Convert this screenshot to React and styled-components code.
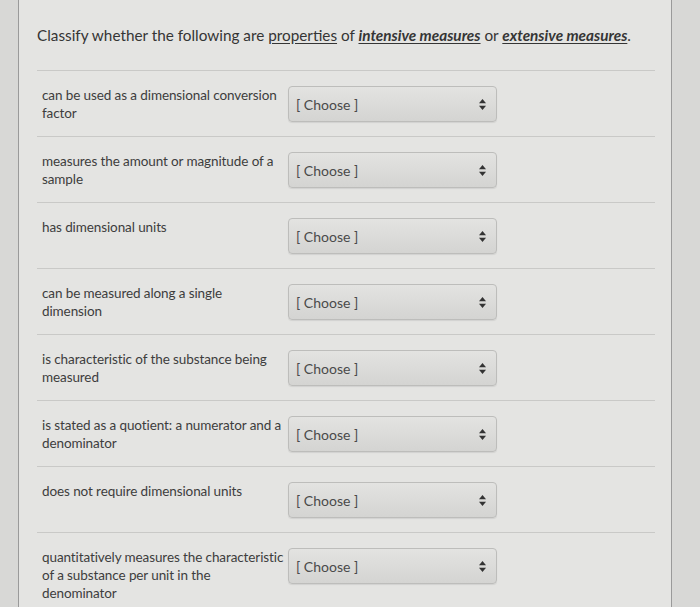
import styled, { createGlobalStyle } from "styled-components";

const Global = createGlobalStyle`
  body {
    margin: 0;
    background: #d8d8d6;
    font-family: Lato, "Open Sans", sans-serif;
    color: #3b3b3b;
  }
`;

const Panel = styled.div`
  margin-left: 18px;
  width: 654px;
  min-height: 607px;
  box-sizing: border-box;
  background: #e4e4e2;
  border-left: 1px solid #9a9a9a;
  border-right: 1px solid #9a9a9a;
  padding: 24px 17px 0 18px;
`;

const Title = styled.p`
  margin: 0 0 24px 0;
  font-size: 15.3px;
  line-height: 22px;
  color: #353535;
`;

const Link = styled.span`
  text-decoration: underline;
  text-underline-offset: 2px;
  font-weight: ${({ strong }) => (strong ? 700 : 400)};
  font-style: ${({ strong }) => (strong ? "italic" : "normal")};
`;

const List = styled.div`
  border-top: 1px solid #c9c9c7;
  width: 618px;
`;

const Row = styled.div`
  display: flex;
  align-items: flex-start;
  gap: 4px;
  padding: 15px 0 14px 5px;
  min-height: 36px;
  border-bottom: 1px solid #c9c9c7;
`;

const Label = styled.div`
  width: 242px;
  font-size: 13.5px;
  line-height: 18px;
  letter-spacing: -0.1px;
  color: #3d3d3d;
`;

const Select = styled.div`
  width: 209px;
  height: 36px;
  box-sizing: border-box;
  display: flex;
  align-items: center;
  justify-content: space-between;
  padding: 0 10px 0 7px;
  border: 1px solid #bdbdbb;
  border-radius: 4px;
  background: linear-gradient(#e3e3e1, #d4d4d2);
  box-shadow: 0 1px 1px rgba(0, 0, 0, 0.08);
  font-size: 14px;
  color: #4a4a4a;
`;

const Arrows = () => (
  <svg width="7" height="11" viewBox="0 0 7 11">
    <path d="M3.5 0 L7 4.2 L0 4.2 Z" fill="#333" />
    <path d="M0 6.8 L7 6.8 L3.5 11 Z" fill="#333" />
  </svg>
);

const items = [
  "can be used as a dimensional conversion factor",
  "measures the amount or magnitude of a sample",
  "has dimensional units",
  "can be measured along a single dimension",
  "is characteristic of the substance being measured",
  "is stated as a quotient: a numerator and a denominator",
  "does not require dimensional units",
  "quantitatively measures the characteristic of a substance per unit in the denominator",
];

function App() {
  return (
    <>
      <Global />
      <Panel>
        <Title>
          Classify whether the following are <Link>properties</Link> of{" "}
          <Link strong>intensive measures</Link> or{" "}
          <Link strong>extensive measures</Link>.
        </Title>
        <List>
          {items.map((text) => (
            <Row key={text}>
              <Label>{text}</Label>
              <Select>
                <span>[ Choose ]</span>
                <Arrows />
              </Select>
            </Row>
          ))}
        </List>
      </Panel>
    </>
  );
}

export default App;
